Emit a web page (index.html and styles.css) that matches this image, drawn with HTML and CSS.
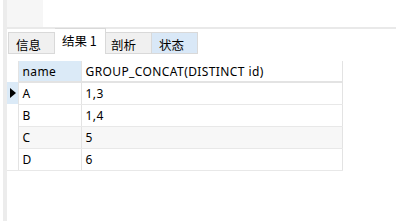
FILE: index.html
```html
<!doctype html>
<html lang="zh">
<head>
  <meta charset="utf-8">
  <title>结果 1</title>
  <link rel="stylesheet" href="styles.css">
</head>
<body>
  <div class="app">
    <div class="rail"></div>
    <div class="main">
      <div class="top"><div class="stub"></div></div>
      <div class="sep"></div>

      <!-- Tabs -->
      <div class="tabs">
        <div class="tab">信息</div>
        <div class="tab active">结果 1</div>
        <div class="tab">剖析</div>
        <div class="tab hover">状态</div>
      </div>

      <!-- Result grid -->
      <table class="grid">
        <colgroup>
          <col class="c-ind"><col class="c-name"><col class="c-val">
        </colgroup>
        <thead>
          <tr><th class="ind"></th><th class="sel">name</th><th>GROUP_CONCAT(DISTINCT id)</th></tr>
        </thead>
        <tbody>
          <tr class="cur">
            <td class="ind">
              <svg width="6" height="10" viewBox="0 0 6 10"><path d="M0 0L6 5L0 10Z" fill="#000"/></svg>
            </td>
            <td>A</td><td>1,3</td>
          </tr>
          <tr><td class="ind"></td><td>B</td><td>1,4</td></tr>
          <tr class="alt"><td class="ind"></td><td>C</td><td>5</td></tr>
          <tr><td class="ind"></td><td>D</td><td>6</td></tr>
        </tbody>
      </table>
    </div>
  </div>
</body>
</html>
```

FILE: styles.css
```css
*,*::before,*::after{box-sizing:border-box}
body{margin:0;background:#fff;color:#000;
     font-family:"Noto Sans","Noto Sans CJK SC",sans-serif;font-size:12px}

/* ---------- Frame ---------- */
.app{display:flex;height:221px;overflow:hidden}
.rail{width:4px;margin-left:3px;background:#ececec}
.main{flex:1;display:flex;flex-direction:column}
.top{height:27px;display:flex}
.stub{width:36px;background:#f6f6f6}
.sep{height:2px;background:#e9e9e9}

/* ---------- Tabs ---------- */
.tabs{display:flex;align-items:flex-end;height:25px;padding-left:1px}
.tab{height:22px;width:47px;padding-left:7px;line-height:23px;
     background:#f0f0f0;border:1px solid #d9d9d9;border-left:0;
     font-family:"Noto Sans CJK SC",sans-serif;font-size:12.5px}
.tab:first-child{border-left:1px solid #d9d9d9}
.tab.active{height:26px;width:51px;background:#fff;line-height:24px;border-bottom:0;padding-left:7px}
.tab.active + .tab{width:46px;padding-left:5px}
.tab.hover{width:46px;background:#d9e8f7;border-color:#d9d9d9}

/* ---------- Grid ---------- */
.grid{margin-top:7px;width:336px;border-collapse:collapse;table-layout:fixed;letter-spacing:.4px}
.c-ind{width:11px}
.c-name{width:63px}
.grid th,.grid td{height:22px;padding:0 0 0 4px;text-align:left;font-weight:normal;
     white-space:nowrap;border-right:1px solid #e3e3e3;border-bottom:1px solid #e8e8e8}
.grid th{height:21px;border-bottom:2px solid #e3e3e3}
.grid th.sel{background:#dbeaf7}
.grid .ind{padding:0 0 0 3px;border-bottom:0;border-right:1px solid #e3e3e3}
.grid tbody tr:last-child .ind{border-bottom:1px solid #e8e8e8}
.grid tr.cur .ind{background:#dbeaf7}
.grid tr.alt td:not(.ind){background:#f7f7f7}
.grid svg{display:block}
```
